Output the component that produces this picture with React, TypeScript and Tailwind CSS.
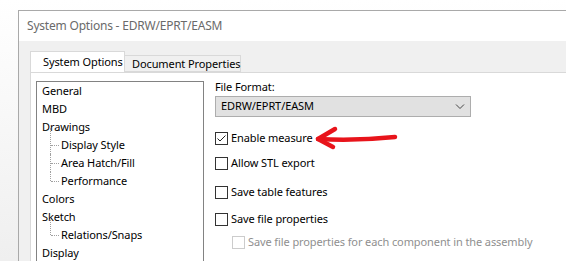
import React from 'react';

const font = "font-['Segoe_UI','Noto_Sans',sans-serif]";

type TreeItem = { label: string; child?: boolean; first?: boolean; last?: boolean };

const tree: TreeItem[] = [
  { label: 'General' },
  { label: 'MBD' },
  { label: 'Drawings' },
  { label: 'Display Style', child: true, first: true },
  { label: 'Area Hatch/Fill', child: true },
  { label: 'Performance', child: true, last: true },
  { label: 'Colors' },
  { label: 'Sketch' },
  { label: 'Relations/Snaps', child: true, first: true, last: true },
  { label: 'Display' },
];

function TreeRow({ item }: { item: TreeItem }) {
  if (!item.child) {
    return <div className="h-[18px] leading-[18px] pl-[5px] whitespace-nowrap">{item.label}</div>;
  }
  // dotted connector: first child reaches up to the parent row
  let line = 'top-0 h-[18px]';
  if (item.first && item.last) line = 'top-[-8px] h-[17px]';
  else if (item.first) line = 'top-[-8px] h-[26px]';
  else if (item.last) line = 'top-0 h-[9px]';
  return (
    <div className="relative h-[18px] leading-[18px] pl-[24px] whitespace-nowrap">
      <span className={`absolute left-[13px] w-0 border-l border-dotted border-[#a0a0a0] ${line}`} />
      <span className="absolute left-[14px] top-[9px] w-[8px] border-t border-dotted border-[#a0a0a0]" />
      {item.label}
    </div>
  );
}

function Check({ checked, disabled }: { checked?: boolean; disabled?: boolean }) {
  return (
    <span
      className={`w-[13px] h-[13px] shrink-0 border bg-white flex items-center justify-center ${
        disabled ? 'border-[#cccccc]' : 'border-[#333333]'
      }`}
    >
      {checked && (
        <svg width="11" height="11" viewBox="0 0 11 11">
          <path d="M1.5 5.5 L4 8 L9.5 2.5" fill="none" stroke="#222" strokeWidth="1" />
        </svg>
      )}
    </span>
  );
}

function Option({ label, checked, disabled, className }: { label: string; checked?: boolean; disabled?: boolean; className?: string }) {
  return (
    <div className={`flex items-center h-[16px] ${className ?? ''}`}>
      <Check checked={checked} disabled={disabled} />
      <span className={`ml-[3px] whitespace-nowrap ${disabled ? 'text-[#8f8f8f]' : 'text-black'}`}>{label}</span>
    </div>
  );
}

export default function App() {
  return (
    <div className={`relative w-[566px] h-[261px] overflow-hidden bg-gradient-to-b from-white to-[#efefef] pl-[18px] pt-[10px] text-[11px] tracking-[-0.1px] ${font}`}>
      <div className="h-[251px] border-l border-t border-[#a9a9a9] bg-[#f0f0f0] flex flex-col">
        <div className="h-[30px] shrink-0 bg-white flex items-center pl-[8px] text-[12px] tracking-[-0.2px] text-[#6a6a6a]">
          System Options - EDRW/EPRT/EASM
        </div>
        <div className="pt-[11px] pl-[11px] flex-1 flex flex-col">
          <div className="flex items-end h-[20px] relative z-10">
            <div className="w-[95px] h-[21px] pl-[12px] bg-white border border-b-0 border-[#d9d9d9] leading-[20px] text-black whitespace-nowrap">
              System Options
            </div>
            <div className="w-[116px] h-[17px] pl-[7px] bg-[#f0f0f0] border border-l-0 border-[#d9d9d9] leading-[16px] text-black whitespace-nowrap">
              Document Properties
            </div>
          </div>
          <div className="flex-1 bg-white border-l border-t border-[#d9d9d9] flex pl-[5px] pt-[8px]">
            <div className="w-[168px] h-full border-l border-t border-r border-[#828282] text-black">
              {tree.map((t) => (
                <TreeRow key={t.label} item={t} />
              ))}
            </div>
            <div className="ml-[11px] flex flex-col text-black">
              <div className="h-[14px] leading-[14px] -mt-[1px]">File Format:</div>
              <div className="mt-[2px] w-[256px] h-[21px] bg-[#e1e1e1] border border-[#adadad] flex items-center justify-between pl-[5px] pr-[5px]">
                <span>EDRW/EPRT/EASM</span>
                <svg width="10" height="6" viewBox="0 0 10 6">
                  <path d="M1 0.5 L5 4.5 L9 0.5" fill="none" stroke="#444" strokeWidth="1" />
                </svg>
              </div>
              <Option label="Enable measure" checked className="mt-[13px]" />
              <Option label="Allow STL export" className="mt-[9px]" />
              <Option label="Save table features" className="mt-[13px]" />
              <Option label="Save file properties" className="mt-[11px]" />
              <Option label="Save file properties for each component in the assembly" disabled className="mt-[7px] ml-[17px]" />
            </div>
          </div>
        </div>
      </div>
      <svg className="absolute left-[310px] top-[124px]" width="92" height="30" viewBox="310 124 92 30">
        <path d="M318 139 Q356 141 395 137" fill="none" stroke="#e8141b" strokeWidth="4.5" strokeLinecap="round" />
        <path d="M335 129 L318 139 L333 147" fill="none" stroke="#e8141b" strokeWidth="4.5" strokeLinecap="round" strokeLinejoin="round" />
      </svg>
    </div>
  );
}
